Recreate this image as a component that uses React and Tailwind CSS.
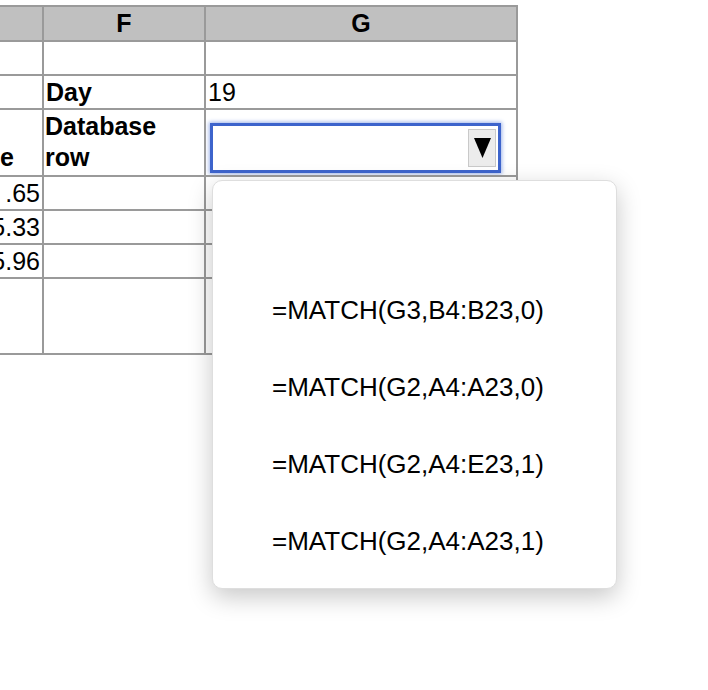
// Spreadsheet with an open formula dropdown in G4
const options = [
  "",
  "=MATCH(G3,B4:B23,0)",
  "=MATCH(G2,A4:A23,0)",
  "=MATCH(G2,A4:E23,1)",
  "=MATCH(G2,A4:A23,1)",
];

const cell = "border-r-2 border-b-2 border-[#9a9a9a] overflow-hidden";

function NumCell({ value }) {
  return (
    <div className={`${cell} flex items-center justify-end pr-[2px] whitespace-nowrap`}>
      {value}
    </div>
  );
}

function Select() {
  return (
    <div className="ml-[4px] mb-[2px] flex h-[50px] w-[291px] items-start justify-end border-[3px] border-[#3d64cc] bg-white pr-[2px] pt-[3px] shadow-[0_0_4px_1px_#9db3ea]">
      <div className="flex h-[38px] w-[28px] items-center justify-center border border-[#c9c9c9] bg-[#ececec]">
        <svg width="17" height="20" viewBox="0 0 17 20">
          <polygon points="0,0 17,0 8.5,20" fill="#000" />
        </svg>
      </div>
    </div>
  );
}

export default function App() {
  return (
    <div className="relative h-[690px] w-[708px] overflow-hidden bg-white text-black font-['Liberation_Sans',Arial,sans-serif]">
      <div className="overflow-hidden pt-[5px]">
        <div className="ml-[-81px] grid w-max grid-cols-[125px_162px_312px] grid-rows-[35px_34px_34px_67px_34px_34px_34px_76px] border-t-2 border-[#9a9a9a] text-[25px] leading-[31px]">
          {/* header */}
          <div className={`${cell} flex items-center justify-center bg-[#c0c0c0] font-bold`}>E</div>
          <div className={`${cell} flex items-center justify-center bg-[#c0c0c0] font-bold`}>F</div>
          <div className={`${cell} flex items-center justify-center bg-[#c0c0c0] font-bold`}>G</div>

          {/* row 1 */}
          <div className={cell} />
          <div className={cell} />
          <div className={cell} />

          {/* row 2 */}
          <div className={cell} />
          <div className={`${cell} flex items-center pl-[2px] font-bold`}>Day</div>
          <div className={`${cell} flex items-center pl-[2px]`}>19</div>

          {/* row 3 */}
          <div className={`${cell} flex items-end justify-end pb-[2px] pr-[28px] font-bold`}>Price</div>
          <div className={`${cell} pl-[1px] pt-[1px] font-bold`}>
            Database
            <br />
            row
          </div>
          <div className={`${cell} flex items-end`}>
            <Select />
          </div>

          {/* rows 4-6 */}
          <NumCell value=".65" />
          <div className={cell} />
          <div className={cell} />
          <NumCell value="15.33" />
          <div className={cell} />
          <div className={cell} />
          <NumCell value="15.96" />
          <div className={cell} />
          <div className={cell} />

          {/* row 7 */}
          <div className={cell} />
          <div className={cell} />
          <div className={cell} />
        </div>
      </div>

      {/* dropdown list */}
      <ul className="absolute left-[212px] top-[180px] h-[409px] w-[405px] rounded-[10px] border border-[#dedede] bg-white pb-[10px] pt-[14px] text-[26px] shadow-[0_8px_24px_rgba(0,0,0,0.22)]">
        {options.map((o, i) => (
          <li key={i} className="flex h-[77px] items-center whitespace-nowrap pl-[59px]">
            {o}
          </li>
        ))}
      </ul>
    </div>
  );
}
